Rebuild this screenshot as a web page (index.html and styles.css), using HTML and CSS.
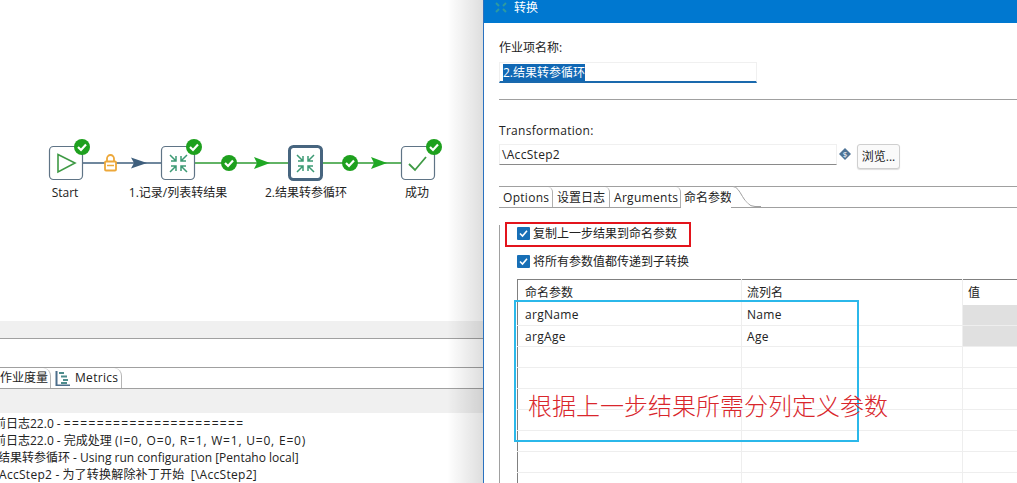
FILE: index.html
```html
<!DOCTYPE html>
<html lang="zh">
<head>
<meta charset="utf-8">
<title>转换</title>
<link rel="stylesheet" href="styles.css">
</head>
<body>
<div class="app">
  <section class="workspace">
    <div class="canvas">
      <svg class="diagram" width="483" height="321" viewBox="0 0 483 321">
        <g fill="none" stroke-width="1.3">
          <path d="M83 163H161" stroke="#3f5f7d"/>
          <path d="M195 163H288M323 163H401" stroke="#2f9b33"/>
        </g>
        <path d="M131 157.500L147 163L131 168.500L134 163Z" fill="#3f5f7d"/>
        <path d="M254 157L270 163L254 169L257 163Z" fill="#1fa824"/>
        <path d="M371 157L387 163L371 169L374 163Z" fill="#1fa824"/>
        <g class="lock">
          <rect x="105" y="161.500" width="11" height="9" rx="1" fill="#fff" stroke="#eda83a" stroke-width="1.800"/>
          <path d="M107 161V158.500a3.500 3.500 0 0 1 7 0V161" fill="none" stroke="#eda83a" stroke-width="1.800"/>
          <path d="M107 165.500H114" stroke="#eda83a" stroke-width="1.500"/>
        </g>
        <rect x="49.500" y="146.500" width="33" height="33" rx="4" fill="#fff" stroke="#5f7486" stroke-width="1.200"/>
        <path d="M58 154.500L75 163L58 172Z" fill="none" stroke="#3f9a45" stroke-width="1.600"/>
        <g>
          <rect x="161.500" y="146.500" width="33" height="33" rx="4" fill="#fff" stroke="#5f7486" stroke-width="1.200"/>
          <g fill="none" stroke="#3d9a74" stroke-width="1.500">
            <path d="M170 155L176 161M176 156V161H171"/>
            <path d="M187 155L181 161M181 156V161H186"/>
            <path d="M170 172L176 166M176 171V166H171"/>
            <path d="M187 172L181 166M181 171V166H186"/>
          </g>
        </g>
        <g>
          <rect x="289.500" y="146.500" width="32" height="33" rx="4" fill="#fff" stroke="#47657f" stroke-width="3"/>
          <g fill="none" stroke="#3d9a74" stroke-width="1.500">
            <path d="M297 155L303 161M303 156V161H298"/>
            <path d="M314 155L308 161M308 156V161H313"/>
            <path d="M297 172L303 166M303 171V166H298"/>
            <path d="M314 172L308 166M308 171V166H313"/>
          </g>
        </g>
        <rect x="401.500" y="146.500" width="33" height="33" rx="4" fill="#fff" stroke="#5f7486" stroke-width="1.200"/>
        <path d="M409 164L415 170L426 157" fill="none" stroke="#3f9a45" stroke-width="1.800"/>
        <g class="ok"><circle cx="82" cy="147" r="8" fill="#1ea01e"/><path d="M78 147L81 150L86 144.500" fill="none" stroke="#fff" stroke-width="2.200"/></g>
        <g class="ok"><circle cx="194" cy="147" r="8" fill="#1ea01e"/><path d="M190 147L193 150L198 144.500" fill="none" stroke="#fff" stroke-width="2.200"/></g>
        <g class="ok"><circle cx="229" cy="163" r="8" fill="#1ea01e"/><path d="M225 163L228 166L233 160.500" fill="none" stroke="#fff" stroke-width="2.200"/></g>
        <g class="ok"><circle cx="350" cy="163" r="8" fill="#1ea01e"/><path d="M346 163L349 166L354 160.500" fill="none" stroke="#fff" stroke-width="2.200"/></g>
        <g class="ok"><circle cx="434" cy="147" r="8" fill="#1ea01e"/><path d="M430 147L433 150L438 144.500" fill="none" stroke="#fff" stroke-width="2.200"/></g>
      </svg>
      <span class="node-label node-label--start">Start</span>
      <span class="node-label node-label--rows">1.记录/列表转结果</span>
      <span class="node-label node-label--params">2.结果转参循环</span>
      <span class="node-label node-label--done">成功</span>
    </div>
    <div class="band band--top"></div>
    <div class="spacer"></div>
    <div class="result-tabs">
      <span class="result-tab result-tab--first">作业度量</span>
      <span class="result-tab">
        <svg class="metrics-icon" width="16" height="16" viewBox="0 0 16 16">
          <path d="M1.500 1V15.500H15" fill="none" stroke="#4d6f8c" stroke-width="2"/>
          <path d="M4 3H9M6 6.500H12M8 10H13M6 13H12" stroke="#4d8c8c" stroke-width="1.800"/>
        </svg>
        <span class="latin">Metrics</span>
      </span>
    </div>
    <div class="band band--log"></div>
    <div class="log">
      <div class="log-line log-line--far">前日志22.0 - <span class="equals">======================</span></div>
      <div class="log-line log-line--far">前日志22.0 - 完成处理 <span class="counts">(I=0, O=0, R=1, W=1, U=0, E=0)</span></div>
      <div class="log-line log-line--mid">结果转参循环 - Using run configuration [Pentaho local]</div>
      <div class="log-line log-line--near"><span class="latin">AccStep2</span> - <span class="wide-cjk">为了转换解除补丁开始</span>&nbsp; <span class="latin">[\AccStep2]</span></div>
    </div>
    <div class="window-shadow"></div>
  </section>

  <section class="dialog">
    <header class="titlebar">
      <svg class="title-icon" width="12" height="12" viewBox="0 0 12 12">
        <path d="M1 1L4 4M11 1L8 4M1 10L4 7M11 10L8 7" stroke="#2d9aa0" stroke-width="2"/>
      </svg>
      <span>转换</span>
    </header>
    <div class="dialog-body">
      <label class="field-label">作业项名称:</label>
      <div class="field field--focus"><span class="selected">2.结果转参循环</span></div>
    </div>
    <hr class="rule">
    <div class="dialog-body dialog-body--trans">
      <label class="field-label"><span class="latin">Transformation:</span></label>
      <div class="trans-row">
        <div class="field field--path"><span class="latin">\AccStep2</span></div>
        <svg class="var-icon" width="14" height="14" viewBox="0 0 14 14">
          <path d="M7 1L13 7L7 13L1 7Z" fill="#4d7396"/>
          <text x="7" y="9.800" text-anchor="middle" class="var-text">$</text>
        </svg>
        <span class="browse">浏览...</span>
      </div>
    </div>
    <div class="tabs">
      <span class="tab tab--options"><span class="latin">Options</span></span>
      <span class="tab tab--log">设置日志</span>
      <span class="tab tab--args"><span class="latin">Arguments</span></span>
      <span class="tab tab--active">命名参数
        <svg class="tab-curve" width="30" height="22" viewBox="0 0 30 22">
          <path d="M0 0.500H2C10 0.500 12 20.500 24 20.500H30" fill="#fff" stroke="#a0a0a0"/>
          <path d="M0 1V21H20L0 1Z" fill="#fff"/>
        </svg>
      </span>
    </div>
    <div class="tab-panel">
      <label class="check check--first"><span class="box"><svg width="13" height="13" viewBox="0 0 13 13"><path d="M3 6.500L5.500 9L10 3.800" fill="none" stroke="#fff" stroke-width="1.600"/></svg></span>复制上一步结果到命名参数</label>
      <label class="check check--second"><span class="box"><svg width="13" height="13" viewBox="0 0 13 13"><path d="M3 6.500L5.500 9L10 3.800" fill="none" stroke="#fff" stroke-width="1.600"/></svg></span>将所有参数值都传递到子转换</label>
      <table class="params">
        <colgroup><col class="col-name"><col class="col-field"><col class="col-value"></colgroup>
        <thead><tr><th>命名参数</th><th>流列名</th><th>值</th></tr></thead>
        <tbody>
          <tr><td><span class="latin">argName</span></td><td><span class="latin">Name</span></td><td class="locked"></td></tr>
          <tr><td><span class="latin">argAge</span></td><td><span class="latin">Age</span></td><td class="locked"></td></tr>
          <tr><td></td><td></td><td></td></tr>
          <tr><td></td><td></td><td></td></tr>
          <tr><td></td><td></td><td></td></tr>
          <tr><td></td><td></td><td></td></tr>
          <tr><td></td><td></td><td></td></tr>
          <tr><td></td><td></td><td></td></tr>
          <tr><td></td><td></td><td></td></tr>
        </tbody>
      </table>
    </div>
  </section>

  <div class="mark mark--red"></div>
  <div class="mark mark--blue"></div>
  <div class="note">根据上一步结果所需分列定义参数</div>
</div>
</body>
</html>
```

FILE: styles.css
```css
* { box-sizing: border-box; }

html, body {
  margin: 0;
  height: 483px;
  overflow: hidden;
  background: #fff;
}

body {
  font-family: "Open Sans", "Noto Sans CJK SC", sans-serif;
  font-size: 12px;
  color: #222;
}

.latin { letter-spacing: .3px; }

.app {
  position: relative;
  display: flex;
  width: 1017px;
  height: 483px;
  overflow: hidden;
}

/* left: job canvas and results */
.workspace {
  position: relative;
  flex: 0 0 483px;
  display: flex;
  flex-direction: column;
  overflow: hidden;
}

.canvas {
  position: relative;
  flex: 0 0 321px;
}

.diagram { display: block; }

.node-label {
  position: absolute;
  top: 184px;
  transform: translateX(-50%);
  line-height: 17px;
  white-space: nowrap;
}
.node-label--start { left: 65px; }
.node-label--rows { left: 178px; }
.node-label--params { left: 306px; }
.node-label--done { left: 417px; }

.band { background: #f0f0f0; }
.band--top {
  flex: 0 0 18px;
  border-bottom: 1px solid #a0a0a0;
}
.spacer { flex: 0 0 28px; }

.result-tabs {
  flex: 0 0 22px;
  display: flex;
  border-top: 1px solid #a0a0a0;
  border-bottom: 1px solid #a0a0a0;
}
.result-tab {
  display: flex;
  align-items: center;
  gap: 4px;
  width: 71px;
  padding-left: 4px;
  border-right: 1px solid #b5b5b5;
  border-top-right-radius: 8px;
  line-height: 20px;
  font-size: 12px;
}
.result-tab--first {
  width: 51px;
  padding-left: 0;
}
.metrics-icon { flex: none; }

.band--log { flex: 0 0 24px; }

.log { padding-top: 2px; }
.log-line {
  height: 17px;
  line-height: 17px;
  white-space: nowrap;
}
.log-line--far { margin-left: -6px; }
.log-line--mid { margin-left: -2px; }
.log-line--near { margin-left: -1px; }
.equals { letter-spacing: 1.35px; }
.counts { letter-spacing: .8px; }
.wide-cjk { letter-spacing: .2px; }

.window-shadow {
  position: absolute;
  top: 0;
  right: 0;
  bottom: 0;
  width: 36px;
  background: linear-gradient(90deg, rgba(0,0,0,0), rgba(0,0,0,.13));
  pointer-events: none;
}

/* right: dialog window */
.dialog {
  flex: 1;
  min-width: 0;
  border-left: 1px solid #2a72c0;
  background: #fff;
}

.titlebar {
  display: flex;
  align-items: flex-start;
  gap: 7px;
  height: 23px;
  padding: 0 0 0 11px;
  background: #0078d0;
  color: #fff;
  line-height: 15px;
}
.title-icon { margin-top: 2px; }

.dialog-body { padding: 16px 0 0 15px; }
.dialog-body--trans { padding-top: 22px; }

.field-label {
  display: block;
  height: 17px;
  line-height: 17px;
}

.field {
  height: 21px;
  border: 1px solid #f0f0f0;
  line-height: 18px;
}
.field--focus {
  width: 258px;
  margin-top: 6px;
  padding-left: 3px;
  border-bottom: 2px solid #1a69ad;
}
.selected {
  display: inline-block;
  margin-top: 1px;
  background: #1168b4;
  color: #fff;
  line-height: 17px;
}
.field--path {
  flex: 0 0 338px;
  padding-left: 2px;
  border-bottom: 1px solid #8a8a8a;
  line-height: 20px;
}

.rule {
  height: 1px;
  margin: 16px 0 0 15px;
  border: 0;
  background: #a0a0a0;
}

.trans-row {
  display: flex;
  align-items: flex-start;
  margin-top: 5px;
}
.var-icon {
  margin: 3px 5px 0 1px;
  flex: none;
}
.var-text {
  font-size: 8px;
  fill: #fff;
}
.browse {
  width: 43px;
  height: 25px;
  border: 1px solid #cfcfcf;
  border-radius: 3px;
  background: #fafafa;
  box-shadow: 0 1px 1px #ddd;
  text-align: center;
  line-height: 23px;
}

.tabs {
  display: flex;
  height: 22px;
  margin: 17px 0 0 15px;
  border-top: 1px solid #a0a0a0;
  border-bottom: 1px solid #a0a0a0;
  line-height: 22px;
}
.tab {
  position: relative;
  border-right: 1px solid #b0b0b0;
  border-top-right-radius: 5px;
  padding-left: 4px;
  white-space: nowrap;
}
.tab--options { width: 54px; }
.tab--log { width: 57px; }
.tab--args { width: 71px; }
.tab--active {
  width: 50px;
  height: 21px;
  padding-left: 3px;
  border-right: 0;
  background: #fff;
}
.tab-curve {
  position: absolute;
  top: -1px;
  left: 50px;
}

.tab-panel {
  margin-left: 15px;
  height: 300px;
  padding-left: 17px;
  border-left: 1px solid #a0a0a0;
}

.check {
  display: flex;
  align-items: center;
  gap: 3px;
  height: 17px;
  line-height: 17px;
}
.check--first { margin-top: 17px; }
.check--second { margin-top: 11px; }
.box {
  flex: none;
  display: block;
  width: 13px;
  height: 13px;
  border-radius: 1px;
  background: #176fb6;
}
.box svg { display: block; }

.params {
  width: 500px;
  margin-top: 9px;
  table-layout: fixed;
  border-collapse: collapse;
  border-top: 1px solid #808080;
}
.col-name { width: 224px; }
.col-field { width: 221px; }
.col-value { width: 55px; }
.params th, .params td {
  height: 21px;
  padding: 1px 0 0 5px;
  border-right: 1px solid #eeeeee;
  border-bottom: 1px solid #eeeeee;
  font-weight: 400;
  text-align: left;
  line-height: 16px;
}
.params th:first-child, .params td:first-child {
  padding-left: 7px;
  border-left: 1px solid #808080;
}
.params th {
  height: 25px;
  border-bottom: 0;
}
.params td.locked { background: #e0e0e0; }

/* annotations over the screenshot */
.mark {
  position: absolute;
  pointer-events: none;
}
.mark--red {
  left: 505px;
  top: 222px;
  width: 186px;
  height: 25px;
  border: 2px solid #e3141c;
}
.mark--blue {
  left: 514px;
  top: 300px;
  width: 345px;
  height: 142px;
  border: 2px solid #2bb8ea;
}
.note {
  position: absolute;
  left: 528px;
  top: 390px;
  width: 370px;
  font-family: "Noto Sans CJK SC", sans-serif;
  font-size: 24px;
  line-height: 30px;
  font-weight: 300;
  color: #d9262c;
  white-space: nowrap;
}
```
